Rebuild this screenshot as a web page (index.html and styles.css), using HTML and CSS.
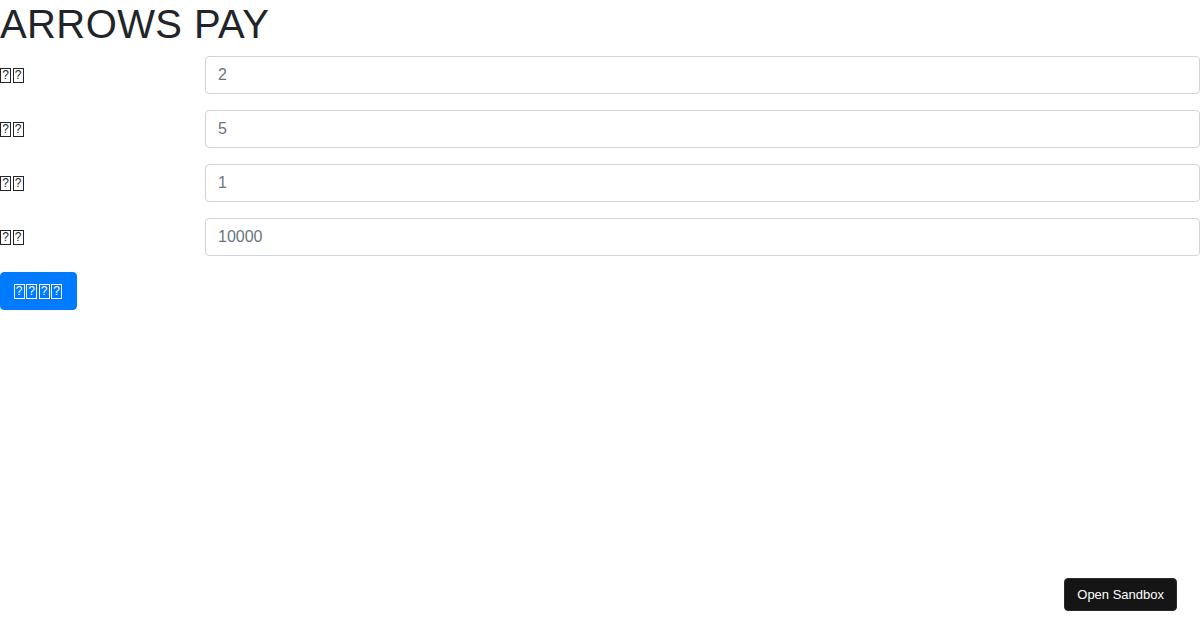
FILE: index.html
```html
<!DOCTYPE html>
<html lang="zh">
<head>
<meta charset="utf-8">
<title>ARROWS PAY</title>
<link rel="stylesheet" href="styles.css">
</head>
<body>
<div class="app">
  <h1 class="title">ARROWS PAY</h1>
  <form class="form">
    <div class="row">
      <label class="label"><span class="tofu">?</span><span class="tofu">?</span></label>
      <div class="field"><input class="input" type="text" placeholder="2"></div>
    </div>
    <div class="row">
      <label class="label"><span class="tofu">?</span><span class="tofu">?</span></label>
      <div class="field"><input class="input" type="text" placeholder="5"></div>
    </div>
    <div class="row">
      <label class="label"><span class="tofu">?</span><span class="tofu">?</span></label>
      <div class="field"><input class="input" type="text" placeholder="1"></div>
    </div>
    <div class="row">
      <label class="label"><span class="tofu">?</span><span class="tofu">?</span></label>
      <div class="field"><input class="input" type="text" placeholder="10000"></div>
    </div>
    <button class="btn" type="button"><span class="tofu">?</span><span class="tofu">?</span><span class="tofu">?</span><span class="tofu">?</span></button>
  </form>
</div>
<a class="sandbox" href="#">Open Sandbox</a>
</body>
</html>
```

FILE: styles.css
```css
* { box-sizing: border-box; }
html, body { margin: 0; padding: 0; background: #fff; }
body {
  font-family: "Liberation Sans", Arial, sans-serif;
  font-size: 16px;
  line-height: 1.5;
  color: #212529;
}
.title {
  margin: 0 0 8px 0;
  font-size: 40px;
  font-weight: 400;
  line-height: 1.2;
  letter-spacing: 0.4px;
}
.form { margin: 0; }
.row {
  display: grid;
  grid-template-columns: 205px 1fr;
  margin-bottom: 16px;
}
.label {
  display: flex;
  align-items: center;
  height: 38px;
}
.tofu {
  display: inline-block;
  width: 11px;
  height: 15px;
  margin-right: 1.5px;
  border: 1px solid currentColor;
  font-size: 12px;
  line-height: 13px;
  text-align: center;
  font-weight: 400;
}
.input {
  display: block;
  width: 100%;
  height: 38px;
  padding: 6px 12px;
  font-family: inherit;
  font-size: 16px;
  line-height: 1.5;
  color: #495057;
  background: #fff;
  border: 1px solid #ced4da;
  border-radius: 4px;
  outline: none;
}
.input::placeholder { color: #6c757d; opacity: 1; }
.btn {
  display: inline-flex;
  align-items: center;
  height: 38px;
  padding: 0 12px 0 12.5px;
  font-family: inherit;
  font-size: 16px;
  color: #fff;
  background: #007bff;
  border: 1px solid #007bff;
  border-radius: 4px;
}
.sandbox {
  position: fixed;
  right: 23px;
  bottom: 19px;
  height: 33px;
  padding: 0 12px;
  display: flex;
  align-items: center;
  background: #151515;
  color: #fff;
  font-family: "Liberation Sans", Arial, sans-serif;
  font-size: 13px;
  text-decoration: none;
  border-radius: 4px;
  border: 1px solid #2a2a2a;
}
```
